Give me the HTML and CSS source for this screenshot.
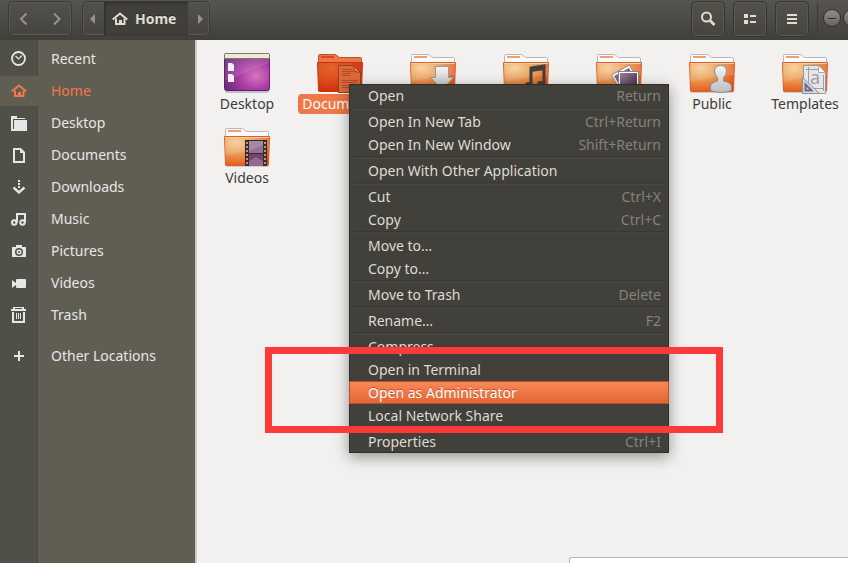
FILE: index.html
```
<!doctype html>
<html lang="en">
<head>
  <meta charset="UTF-8">
  <meta name="viewport" content="width=device-width, initial-scale=1.0">
  <title>Home</title>
  <link rel="stylesheet" href="styles.css">
</head>
<body>
  <svg class="defs" aria-hidden="true">
    <defs>
      <radialGradient id="orange" cx="0.25" cy="0.2" r="0.95">
        <stop offset="0" stop-color="#f6cd92"/>
        <stop offset="0.45" stop-color="#ea9650"/>
        <stop offset="1" stop-color="#e2460f"/>
      </radialGradient>
      <radialGradient id="red" cx="0.3" cy="0.2" r="0.9">
        <stop offset="0" stop-color="#e5642b"/>
        <stop offset="0.5" stop-color="#dc4a1a"/>
        <stop offset="1" stop-color="#d02606"/>
      </radialGradient>
      <radialGradient id="purple" cx="0.7" cy="0.6" r="0.75">
        <stop offset="0" stop-color="#d775bd"/>
        <stop offset="0.5" stop-color="#a93ba5"/>
        <stop offset="1" stop-color="#682c78"/>
      </radialGradient>
      <linearGradient id="silver" x1="0" y1="0" x2="0" y2="1">
        <stop offset="0" stop-color="#f5f5f5"/>
        <stop offset="1" stop-color="#bdbdbd"/>
      </linearGradient>
      <linearGradient id="photo" x1="0" y1="0" x2="1" y2="1">
        <stop offset="0" stop-color="#9b7f9c"/>
        <stop offset="1" stop-color="#3d2b45"/>
      </linearGradient>
      <symbol id="folder" viewBox="0 0 48 48">
        <rect x="2" y="38" width="44" height="4" rx="2" fill="#000" opacity="0.15"/>
        <path d="M2.500 15V4.500q0-1 1-1h16l4 3h21q1 0 1 1V15z" fill="#fafafa" stroke="#b9b9b9"/>
        <rect x="5" y="5" width="13" height="2" fill="#f0a070"/>
        <path d="M1.500 11.500h45l-1 28q0 1-1 1h-41q-1 0-1-1z" fill="url(#orange)" stroke="#d9602b"/>
        <path d="M2 12.500h44" stroke="#f9c9a0"/>
        <path d="M2 13h44v11q-20 1-44 7z" fill="#fff" opacity="0.13"/>
      </symbol>
      <symbol id="home" viewBox="0 0 16 16">
        <path d="M0.700 8.500L8 2.500l7.300 6" fill="none" stroke="currentColor" stroke-width="2"/>
        <path d="M3 7.500h2V12h2V9h3v3h1.500V7.500h2V14H3z" fill="currentColor"/>
      </symbol>
    </defs>
  </svg>

  <div class="window">
    <header class="header">
      <div class="btn-group">
        <button class="nav-btn" aria-label="Back">
          <svg viewBox="0 0 16 16"><path d="M9.500 2.500L4 8l5.500 5.500" fill="none" stroke="currentColor" stroke-width="2"/></svg>
        </button>
        <button class="nav-btn" aria-label="Forward">
          <svg viewBox="0 0 16 16"><path d="M6 2.500L11.500 8 6 13.500" fill="none" stroke="currentColor" stroke-width="2"/></svg>
        </button>
      </div>
      <div class="btn-group">
        <button class="path-arrow" aria-label="Scroll path left">
          <svg viewBox="0 0 16 16"><path d="M9 3v10L4 8z" fill="currentColor"/></svg>
        </button>
        <button class="path-btn">
          <svg viewBox="0 0 16 16"><use href="#home"/></svg>
          Home
        </button>
        <button class="path-arrow" aria-label="Scroll path right">
          <svg viewBox="0 0 16 16"><path d="M7 3v10l5-5z" fill="currentColor"/></svg>
        </button>
      </div>
      <div class="header-end">
        <button class="tool-btn" aria-label="Search">
          <svg viewBox="0 0 16 16"><g fill="none" stroke="currentColor"><circle cx="6.500" cy="6" r="4.500" stroke-width="2"/><path d="M10 9.500l4.500 4.500" stroke-width="2.600"/></g></svg>
        </button>
        <button class="tool-btn" aria-label="View options">
          <svg viewBox="0 0 16 16"><path d="M2 3h4v4H2zM2 9h4v4H2zM8 4h6v2H8zM8 10h6v2H8z" fill="currentColor"/></svg>
        </button>
        <button class="tool-btn" aria-label="Menu">
          <svg viewBox="0 0 16 16"><path d="M3 3h10v2H3zM3 7h10v2H3zM3 11h10v2H3z" fill="currentColor"/></svg>
        </button>
        <div class="window-btns">
          <button class="round-btn" aria-label="Minimize">
            <svg viewBox="0 0 16 16"><path d="M4 8.500h8" stroke="currentColor"/></svg>
          </button>
          <button class="round-btn" aria-label="Maximize"></button>
        </div>
      </div>
    </header>

    <div class="content">
      <nav class="sidebar">
        <a class="place" href="#recent">
          <span class="place-icon"><svg viewBox="0 0 16 16"><g fill="none" stroke="currentColor"><circle cx="7.500" cy="7.500" r="6.500" stroke-width="1.800"/><path d="M4.500 5l3 3 3.500-3.500" stroke-width="1.200"/></g></svg></span>
          Recent
        </a>
        <a class="place active" href="#home-folder">
          <span class="place-icon"><svg viewBox="0 0 16 16"><use href="#home"/></svg></span>
          Home
        </a>
        <a class="place" href="#desktop">
          <span class="place-icon"><svg viewBox="0 0 16 16"><path d="M0 1h6v2h8v1H2v10h1v2H0zM3 5h13v11H3z" fill="currentColor"/></svg></span>
          Desktop
        </a>
        <a class="place" href="#documents">
          <span class="place-icon"><svg viewBox="0 0 16 16"><path d="M3 2h6.500L13 5.500V15H3z" fill="none" stroke="currentColor" stroke-width="2"/><path d="M9 2v4h4" fill="currentColor"/></svg></span>
          Documents
        </a>
        <a class="place" href="#downloads">
          <span class="place-icon"><svg viewBox="0 0 16 16"><path d="M7 1h2v2H7zM7 4h2v2H7zM7 7h2v2H7z" fill="currentColor"/><path d="M2.500 8.500L8 13.500l5.500-5" fill="none" stroke="currentColor" stroke-width="2.400"/></svg></span>
          Downloads
        </a>
        <a class="place" href="#music">
          <span class="place-icon"><svg viewBox="0 0 16 16"><g fill="none" stroke="currentColor" stroke-width="2"><circle cx="3.200" cy="11.500" r="2.200"/><circle cx="11.500" cy="11.500" r="2.200"/><path d="M6 11.500V3h8v8.500"/></g></svg></span>
          Music
        </a>
        <a class="place" href="#pictures">
          <span class="place-icon"><svg viewBox="0 0 16 16"><path fill-rule="evenodd" d="M5 2h6v2h4v10H1V4h4zM8 5a4 4 0 1 0 0 8 4 4 0 0 0 0-8zM8 6.500a2.500 2.500 0 1 1 0 5 2.500 2.500 0 0 1 0-5zM8 8a1 1 0 1 0 0 2 1 1 0 0 0 0-2z" fill="currentColor"/></svg></span>
          Pictures
        </a>
        <a class="place" href="#videos">
          <span class="place-icon"><svg viewBox="0 0 16 16"><path d="M1 5l4 3v2l-4 3z" fill="currentColor"/><rect x="5" y="4" width="10" height="9" rx="1" fill="currentColor"/></svg></span>
          Videos
        </a>
        <a class="place" href="#trash">
          <span class="place-icon"><svg viewBox="0 0 16 16"><path fill-rule="evenodd" d="M2 2V0h11v2h2v2H0V2zM4 1v1h7V1zM1 5h2v9h9V5h2v11H1zM5 6h1v6H5zM7 6h1v6H7zM9 6h1v6H9z" fill="currentColor"/></svg></span>
          Trash
        </a>
        <a class="place place-other" href="#other">
          <span class="place-icon"><svg viewBox="0 0 16 16"><path d="M7 3h2v4h4v2H9v4H7V9H3V7h4z" fill="currentColor"/></svg></span>
          Other Locations
        </a>
      </nav>

      <main class="files">
        <a class="file" href="#desktop">
          <svg viewBox="0 0 48 48">
            <rect x="2" y="38" width="44" height="4" rx="2" fill="#000" opacity="0.200"/>
            <rect x="1.500" y="2.500" width="45" height="37" rx="2" fill="url(#purple)" stroke="#6c1b70"/>
            <path d="M2 8h44v4L2 30z" fill="#fff" opacity="0.100"/>
            <path d="M1.500 7.500v-4q0-1 1-1h43q1 0 1 1v4z" fill="#ecebda" stroke="#7c7c60"/>
            <path d="M5 12h4l2 2v6H5zM5 23h4l2 2v6H5z" fill="#f3eef3"/>
          </svg>
          <span class="file-name">Desktop</span>
        </a>
        <a class="file selected" href="#documents">
          <svg viewBox="0 0 48 48">
            <path d="M2.500 15V4.500q0-1 1-1h16l4 3h21q1 0 1 1V15z" fill="#ea7747" stroke="#b9532c"/>
            <rect x="5" y="5" width="13" height="2" fill="#df4819"/>
            <path d="M1.500 11.500h45l-1 28q0 1-1 1h-41q-1 0-1-1z" fill="url(#red)" stroke="#c9360d"/>
            <path d="M22.500 14.500h15l7 7v20h-22z" fill="#de6838" stroke="#984020"/>
            <path d="M37.500 14.500l7 7-6-1z" fill="#e68355" stroke="#984020"/>
            <path d="M26 18.500h10M26 20.500h11M26 22.500h9M26 24.500h8M26 29.500h16M26 31.500h14M26 34.500h15M26 36.500h13" stroke="#b04c26"/>
          </svg>
          <span class="file-name">Documents</span>
        </a>
        <a class="file" href="#downloads">
          <svg viewBox="0 0 48 48">
            <use href="#folder"/>
            <path d="M26.500 15.500h13v11h5l-11.500 12-11.500-12h5z" fill="url(#silver)" stroke="#999"/>
          </svg>
          <span class="file-name">Downloads</span>
        </a>
        <a class="file" href="#music">
          <svg viewBox="0 0 48 48">
            <use href="#folder"/>
            <path d="M29 34V17l13-2v18M29 19.500l13-2" fill="none" stroke="#3f3f3d" stroke-width="3"/>
            <ellipse cx="27" cy="34" rx="4" ry="3" fill="#3f3f3d"/>
            <ellipse cx="39" cy="33" rx="4" ry="3" fill="#3f3f3d"/>
          </svg>
          <span class="file-name">Music</span>
        </a>
        <a class="file" href="#pictures">
          <svg viewBox="0 0 48 48">
            <use href="#folder"/>
            <path d="M16.500 24l18-10 9 17-17 10z" fill="#fff" stroke="#888"/>
            <path d="M19 25l15-8 7 14-14 8z" fill="url(#photo)"/>
            <rect x="23.500" y="20.500" width="20" height="19" fill="#fff" stroke="#888"/>
            <rect x="25" y="22" width="17" height="15" fill="url(#photo)"/>
          </svg>
          <span class="file-name">Pictures</span>
        </a>
        <a class="file" href="#public">
          <svg viewBox="0 0 48 48">
            <use href="#folder"/>
            <path d="M22.500 39.500v-4q0-4 7-5.500v-3q-3-3-3-7 0-5.500 6-5.500t6 5.500q0 4-3 7v3q8 1.500 8 5.500v4q-10 4-21 0z" fill="url(#silver)" stroke="#8c8c8c"/>
          </svg>
          <span class="file-name">Public</span>
        </a>
        <a class="file" href="#templates">
          <svg viewBox="0 0 48 48">
            <use href="#folder"/>
            <path d="M22.500 14.500h15l7 7v21h-22z" fill="#e6e6e6" stroke="#9b9b9b"/>
            <path d="M37.500 14.500v7h7z" fill="#fff" stroke="#aaa"/>
            <path d="M25 18.500h13M25 37.500h18M27.500 16v24M42.500 24v16" stroke="#9a9db0"/>
            <text class="glyph" x="29" y="33">a</text>
            <path d="M21.500 26.500l17 16h-17z" fill="#d8d8de" fill-opacity="0.850" stroke="#8c8fa2"/>
            <path d="M24.500 33.500l6 6h-6z" fill="none" stroke="#696d88" stroke-width="2"/>
          </svg>
          <span class="file-name">Templates</span>
        </a>
        <a class="file" href="#videos">
          <svg viewBox="0 0 48 48">
            <use href="#folder"/>
            <rect x="22" y="15" width="22" height="26" fill="#2f2f31"/>
            <rect x="26" y="16" width="14" height="12" fill="#947294"/>
            <rect x="26" y="29" width="14" height="12" fill="#74406f"/>
            <path d="M26 16h14v4l-14 6zM26 36l7-4 7 4v5H26z" fill="#c9a5bf" opacity="0.400"/>
            <path d="M24 17v24M42 17v24" stroke="#d98f60" stroke-width="2" stroke-dasharray="2 2"/>
          </svg>
          <span class="file-name">Videos</span>
        </a>
      </main>
    </div>

    <div class="status-bar"></div>

    <ul class="menu">
      <li><button class="menu-item">Open <span class="accel">Return</span></button></li>
      <li class="separator"></li>
      <li><button class="menu-item">Open In New Tab <span class="accel">Ctrl+Return</span></button></li>
      <li><button class="menu-item">Open In New Window <span class="accel">Shift+Return</span></button></li>
      <li class="separator"></li>
      <li><button class="menu-item">Open With Other Application</button></li>
      <li class="separator"></li>
      <li><button class="menu-item">Cut <span class="accel">Ctrl+X</span></button></li>
      <li><button class="menu-item">Copy <span class="accel">Ctrl+C</span></button></li>
      <li class="separator"></li>
      <li><button class="menu-item">Move to…</button></li>
      <li><button class="menu-item">Copy to…</button></li>
      <li class="separator"></li>
      <li><button class="menu-item">Move to Trash <span class="accel">Delete</span></button></li>
      <li class="separator"></li>
      <li><button class="menu-item">Rename… <span class="accel">F2</span></button></li>
      <li class="separator"></li>
      <li><button class="menu-item">Compress…</button></li>
      <li><button class="menu-item">Open in Terminal</button></li>
      <li><button class="menu-item highlighted">Open as Administrator</button></li>
      <li><button class="menu-item">Local Network Share</button></li>
      <li class="separator"></li>
      <li><button class="menu-item">Properties <span class="accel">Ctrl+I</span></button></li>
    </ul>

    <div class="marker"></div>
  </div>
</body>
</html>
```

FILE: styles.css
```
* {
    box-sizing: border-box;
}

body {
    margin: 0;
    font-family: "Noto Sans", sans-serif;
    font-size: 14px;
    line-height: 20px;
    color: #3c3c3c;
}

button {
    margin: 0;
    padding: 0;
    border: 0;
    background: none;
    color: inherit;
    font: inherit;
}

a {
    color: inherit;
    text-decoration: none;
}

svg {
    display: block;
    width: 16px;
    height: 16px;
    flex-shrink: 0;
}

.defs {
    position: absolute;
    width: 0;
    height: 0;
}

.window {
    position: relative;
    display: flex;
    flex-direction: column;
    min-height: 100vh;
    overflow: hidden;
}

/* header */
.header {
    display: flex;
    align-items: flex-start;
    gap: 10px;
    height: 40px;
    padding: 1px 0 0 8px;
    background: linear-gradient(#575550, #403f3a);
    color: #dfdbd2;
}

.btn-group {
    display: flex;
    height: 35px;
    border: 1px solid #3b3a36;
    border-radius: 5px;
    background: linear-gradient(#53514b, #45443f);
    box-shadow: inset 0 0 0 1px #5a5852;
    color: #96938c;
}

.nav-btn {
    display: flex;
    align-items: center;
    justify-content: center;
    width: 31px;
}

.path-arrow {
    display: flex;
    align-items: center;
    justify-content: center;
    width: 21px;
}

.path-btn {
    display: flex;
    align-items: center;
    gap: 7px;
    padding: 0 12px 0 8px;
    background: #403f3a;
    box-shadow: inset 1px 1px 3px #2c2b28;
    color: #dfdbd2;
    font-weight: bold;
    text-shadow: 0 -1px #2c2b28;
}

.header-end {
    display: flex;
    gap: 8px;
    margin-left: auto;
    margin-right: -13px;
}

.tool-btn {
    display: flex;
    align-items: center;
    justify-content: center;
    width: 34px;
    height: 36px;
    border: 1px solid #36352f;
    border-radius: 5px;
    background: linear-gradient(#53514b, #45443f);
    box-shadow: inset 0 0 0 1px #5a5852;
}

.window-btns {
    display: flex;
    align-items: center;
    gap: 2px;
    height: 30px;
    margin-top: 2px;
    padding-left: 5px;
    border-left: 1px solid #3b3a36;
}

.round-btn {
    width: 18px;
    height: 18px;
    border: 1px solid #32312d;
    border-radius: 50%;
    background: linear-gradient(#8f8d86, #66645e);
    color: #34332f;
}

/* sidebar */
.content {
    display: flex;
    flex: 1;
}

.sidebar {
    flex-shrink: 0;
    width: 197px;
    padding-top: 3px;
    border-right: 2px solid #cbc9c7;
    background: linear-gradient(90deg, #505049 37px, #47473f 37px, #47473f 38px, #605e52 38px);
    color: #e6e6e6;
}

.place {
    display: flex;
    align-items: center;
    gap: 13px;
    height: 32px;
}

.place-icon {
    display: flex;
    align-items: center;
    justify-content: center;
    width: 38px;
    height: 30px;
}

.place.active {
    color: #f07746;
}

.active .place-icon {
    background: #605e52;
}

.place-other {
    margin-top: 9px;
}

/* files */
.files {
    display: grid;
    flex: 1;
    grid-template-columns: repeat(auto-fill, 80px);
    align-content: start;
    gap: 11px 13px;
    padding: 11px 0 0 10px;
    background: #f2f1f0;
}

.file {
    display: flex;
    flex-direction: column;
    align-items: center;
    height: 63px;
}

.file svg {
    width: 48px;
    height: 48px;
    margin-bottom: -5px;
}

.file-name {
    padding: 0 4px;
    border-radius: 4px;
    white-space: nowrap;
}

.selected .file-name {
    background: #f07746;
    color: #fff;
}

.glyph {
    fill: #9a9db0;
    font-size: 18px;
}

.status-bar {
    position: absolute;
    right: 0;
    bottom: 0;
    width: 279px;
    height: 6px;
    border: 1px solid #bab8b6;
    border-width: 1px 0 0 1px;
    border-radius: 3px 0 0 0;
    background: #fff;
}

/* context menu */
.menu {
    position: absolute;
    top: 84px;
    left: 349px;
    width: 320px;
    margin: 0;
    padding: 0;
    list-style: none;
    background: #41403a;
    box-shadow: inset 0 0 0 1px #2f2e2a, 0 4px 14px rgba(0, 0, 0, 0.4);
    color: #dfdbd2;
}

.menu-item {
    display: flex;
    align-items: center;
    justify-content: space-between;
    width: 100%;
    height: 23px;
    padding: 0 8px 0 19px;
}

.accel {
    color: #84827b;
}

.highlighted {
    border: 1px solid #b4512a;
    padding: 0 7px 0 18px;
    background: linear-gradient(#fb8758, #e36633);
    color: #fff;
    text-shadow: 0 -1px #b4512a;
}

.separator {
    height: 3px;
    margin: 0 5px;
    border-top: 1px solid #393833;
    border-bottom: 1px solid #494842;
}

.marker {
    position: absolute;
    top: 347px;
    left: 265px;
    width: 458px;
    height: 86px;
    border: 7px solid #fc3a3a;
}
```
